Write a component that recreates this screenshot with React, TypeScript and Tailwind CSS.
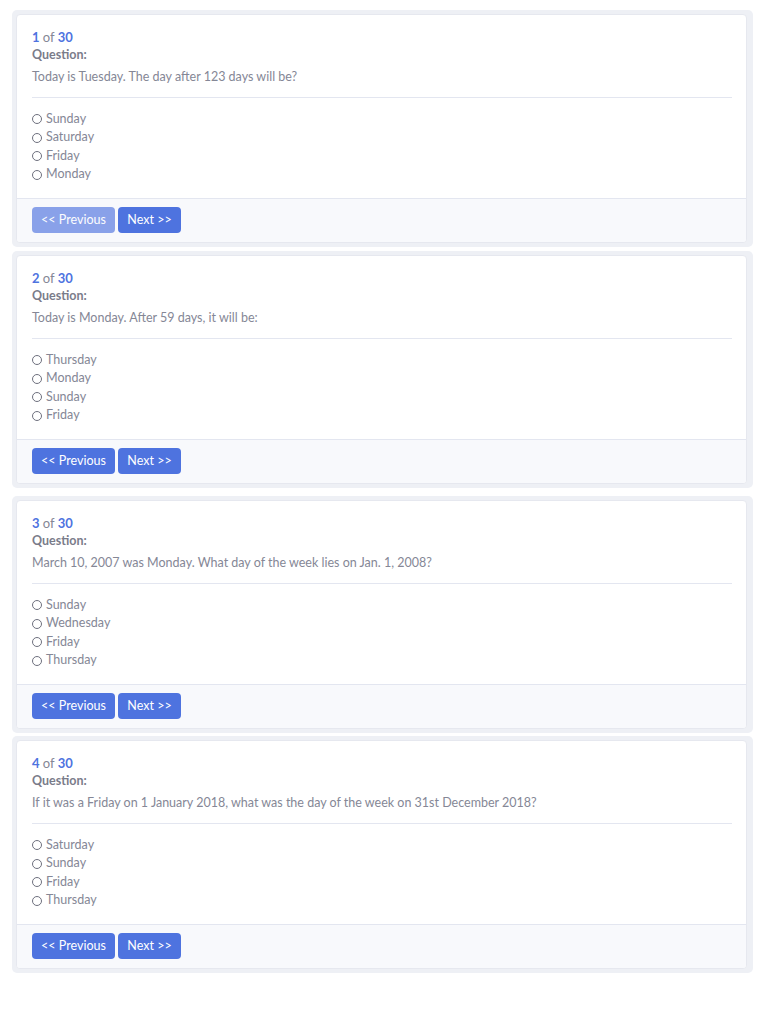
const questions = [
  {
    num: 1,
    text: 'Today is Tuesday. The day after 123 days will be?',
    options: ['Sunday', 'Saturday', 'Friday', 'Monday'],
    gap: 'mt-0',
  },
  {
    num: 2,
    text: 'Today is Monday. After 59 days, it will be:',
    options: ['Thursday', 'Monday', 'Sunday', 'Friday'],
    gap: 'mt-[4px]',
  },
  {
    num: 3,
    text: 'March 10, 2007 was Monday. What day of the week lies on Jan. 1, 2008?',
    options: ['Sunday', 'Wednesday', 'Friday', 'Thursday'],
    gap: 'mt-[8px]',
  },
  {
    num: 4,
    text: 'If it was a Friday on 1 January 2018, what was the day of the week on 31st December 2018?',
    options: ['Saturday', 'Sunday', 'Friday', 'Thursday'],
    gap: 'mt-[3px]',
  },
];

function QuestionCard({ num, text, options, gap }: (typeof questions)[number]) {
  return (
    <div className={`${gap} w-[741px] rounded-[5px] bg-[#eef0f5] py-[4px] pl-[4px] pr-[6px]`}>
      <div className="overflow-hidden rounded-[4px] border border-[#e6e8ef] bg-white">
        {/* Body */}
        <div className="px-[15px] pt-[14px] pb-[14px]">
          <div className="text-[13px] leading-[17px] text-[#858796]">
            <span className="font-bold text-[#4e73df]">{num}</span> of{' '}
            <span className="font-bold text-[#4e73df]">30</span>
          </div>
          <div className="text-[12.5px] leading-[17px] font-bold text-[#7a7c8a]">Question:</div>
          <p className="mt-[5px] text-[12.5px] leading-[17px] text-[#858796]">{text}</p>
          <hr className="mt-[12px] mr-[-1px] border-t border-[#e3e6f0]" />
          <div className="mt-[12px]">
            {options.map((opt) => (
              <label key={opt} className="flex h-[18.5px] items-center text-[12.5px] text-[#858796]">
                <span className="mr-[4px] h-[10px] w-[10px] rounded-full border border-[#6e707e]" />
                {opt}
              </label>
            ))}
          </div>
        </div>

        {/* Footer */}
        <div className="flex gap-[3px] border-t border-[#e3e6f0] bg-[#f8f9fc] px-[15px] pt-[8px] pb-[9px]">
          <button
            className={`h-[26px] w-[83px] rounded-[4px] bg-[#4e73df] text-[12.5px] text-white ${
              num === 1 ? 'opacity-65' : ''
            }`}
          >
            &lt;&lt; Previous
          </button>
          <button className="h-[26px] w-[63px] rounded-[4px] bg-[#4e73df] text-[12.5px] text-white">
            Next &gt;&gt;
          </button>
        </div>
      </div>
    </div>
  );
}

export default function App() {
  return (
    <div className="min-h-[1024px] bg-white pt-[10px] pl-[12px]" style={{ fontFamily: 'Lato, "Open Sans", sans-serif' }}>
      {questions.map((q) => (
        <QuestionCard key={q.num} {...q} />
      ))}
    </div>
  );
}
